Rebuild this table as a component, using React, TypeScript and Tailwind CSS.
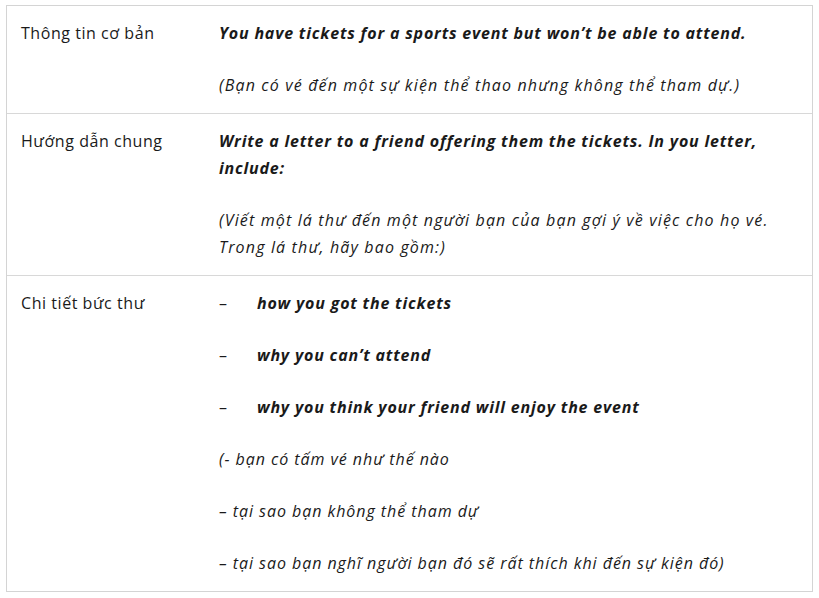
export default function App() {
  const font = { fontFamily: '"Open Sans", "Noto Sans", sans-serif' };
  const bullet = "font-bold italic tracking-[0.8px]";
  const it = "italic tracking-[1.15px]";
  const it3 = "italic tracking-[0.95px]";
  return (
    <div className="w-[819px] h-[598px] bg-white pt-[5px] pl-[6px] text-[16px] leading-[27px] text-[#1a1a1a]" style={font}>
      <div className="w-[807px] border border-[#d4d4d4] border-t-dotted">
        <div className="flex border-b border-[#d8d8d8]">
          <div className="w-[198px] shrink-0 px-[14px] py-[14px] tracking-[0.55px]">Thông tin cơ bản</div>
          <div className="flex-1 px-[14px] py-[14px]">
            <p className={`${bullet} mb-[25px]`}>You have tickets for a sports event but won’t be able to attend.</p>
            <p className={it}>(Bạn có vé đến một sự kiện thể thao nhưng không thể tham dự.)</p>
          </div>
        </div>
        <div className="flex border-b border-[#d8d8d8]">
          <div className="w-[198px] shrink-0 px-[14px] py-[14px] tracking-[0.55px]">Hướng dẫn chung</div>
          <div className="flex-1 px-[14px] py-[14px]">
            <p className={`${bullet} mb-[25px] pr-[40px]`}>Write a letter to a friend offering them the tickets. In you letter, include:</p>
            <p className={it}>(Viết một lá thư đến một người bạn của bạn gợi ý về việc cho họ vé. Trong lá thư, hãy bao gồm:)</p>
          </div>
        </div>
        <div className="flex">
          <div className="w-[198px] shrink-0 px-[14px] py-[14px] tracking-[0.55px]">Chi tiết bức thư</div>
          <div className="flex-1 px-[14px] py-[14px] flex flex-col gap-[25px]">
            <p className="flex"><span className="w-[38px] shrink-0">–</span><span className={bullet}>how you got the tickets</span></p>
            <p className="flex"><span className="w-[38px] shrink-0">–</span><span className={bullet}>why you can’t attend</span></p>
            <p className="flex"><span className="w-[38px] shrink-0">–</span><span className={bullet}>why you think your friend will enjoy the event</span></p>
            <p className={it3}>(- bạn có tấm vé như thế nào</p>
            <p className={it3}>– tại sao bạn không thể tham dự</p>
            <p className={it3}>– tại sao bạn nghĩ người bạn đó sẽ rất thích khi đến sự kiện đó)</p>
          </div>
        </div>
      </div>
    </div>
  );
}
